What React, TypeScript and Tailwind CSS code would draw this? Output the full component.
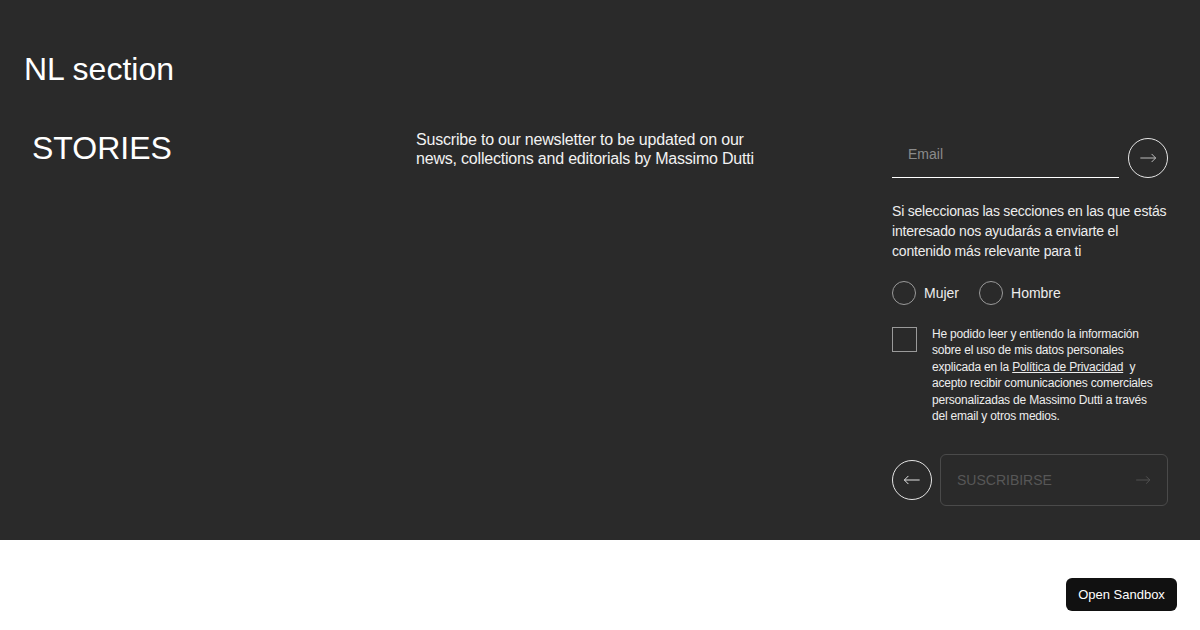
import React from "react";

const ArrowRight = ({ className = "" }: { className?: string }) => (
  <svg viewBox="0 0 20 20" className={className} fill="none" stroke="currentColor" strokeWidth={1.1}>
    <path d="M1.5 10h17M14 5.5l4.5 4.5-4.5 4.5" />
  </svg>
);

const ArrowLeft = ({ className = "" }: { className?: string }) => (
  <svg viewBox="0 0 20 20" className={className} fill="none" stroke="currentColor" strokeWidth={1.1}>
    <path d="M18.5 10h-17M6 5.5L1.5 10 6 14.5" />
  </svg>
);

export default function App() {
  return (
    <div className="min-h-[630px] bg-white font-['Liberation_Sans',Arial,sans-serif]">
      <section className="h-[540px] bg-[#2a2a2a] px-6 pt-[50px] text-white">
        <h1 className="text-[32px] leading-[38px] font-normal">NL section</h1>

        <div className="mt-[40px] flex px-2">
          <div className="w-[384px]">
            <h2 className="text-[32px] leading-[40px] font-normal">STORIES</h2>
          </div>

          <div className="w-[476px] pt-[2px]">
            <p className="w-[360px] text-[16px] leading-[19px] tracking-[-0.2px] text-[#f2f2f2]">
              Suscribe to our newsletter to be updated on our news, collections and editorials by Massimo Dutti
            </p>
          </div>

          <div className="w-[276px]">
            {/* email */}
            <div className="flex items-start gap-[9px]">
              <div className="h-[50px] w-[227px] border-b border-white pl-4 pt-[16px] text-[14px] leading-[20px] text-[#8a8a8a]">
                Email
              </div>
              <button
                type="button"
                className="mt-[10px] flex h-10 w-10 items-center justify-center rounded-full border border-[#e5e5e5] text-[#bdbdbd]"
              >
                <ArrowRight className="h-[18px] w-[18px]" />
              </button>
            </div>

            <p className="mt-[23px] text-[14px] leading-[20px] tracking-[-0.2px] text-[#ededed]">
              Si seleccionas las secciones en las que estás interesado nos ayudarás a enviarte el contenido más relevante para ti
            </p>

            {/* gender */}
            <div className="mt-[20px] flex items-center gap-5">
              <label className="flex items-center gap-2 text-[14px] text-[#ededed]">
                <span className="h-6 w-6 rounded-full border border-[#9a9a9a]" />
                Mujer
              </label>
              <label className="flex items-center gap-2 text-[14px] text-[#ededed]">
                <span className="h-6 w-6 rounded-full border border-[#9a9a9a]" />
                Hombre
              </label>
            </div>

            {/* consent */}
            <div className="mt-[22px] flex items-start gap-[15px]">
              <span className="h-[25px] w-[25px] shrink-0 border border-[#9a9a9a]" />
              <p className="-mt-[1px] w-[230px] text-[12px] leading-[16.4px] tracking-[-0.2px] text-[#ededed]">
                He podido leer y entiendo la información sobre el uso de mis datos personales explicada en la{" "}
                <a className="underline">Política de Privacidad</a>
                {"\u00a0 "}y acepto recibir comunicaciones comerciales personalizadas de Massimo Dutti a través del email
                y otros medios.
              </p>
            </div>

            {/* actions */}
            <div className="mt-[30px] flex items-center gap-2">
              <button
                type="button"
                className="flex h-10 w-10 shrink-0 items-center justify-center rounded-full border border-[#e5e5e5] text-[#e5e5e5]"
              >
                <ArrowLeft className="h-[18px] w-[18px]" />
              </button>
              <button
                type="button"
                className="flex h-[52px] w-[228px] items-center justify-between rounded-md border border-[#4a4a4a] pl-4 pr-4 text-[14px] text-[#575757]"
              >
                SUSCRIBIRSE
                <ArrowRight className="h-4 w-4" />
              </button>
            </div>
          </div>
        </div>
      </section>

      <button
        type="button"
        className="fixed right-[23px] bottom-[19px] h-[33px] w-[111px] rounded-md bg-[#111111] text-[13px] text-white"
      >
        Open Sandbox
      </button>
    </div>
  );
}
